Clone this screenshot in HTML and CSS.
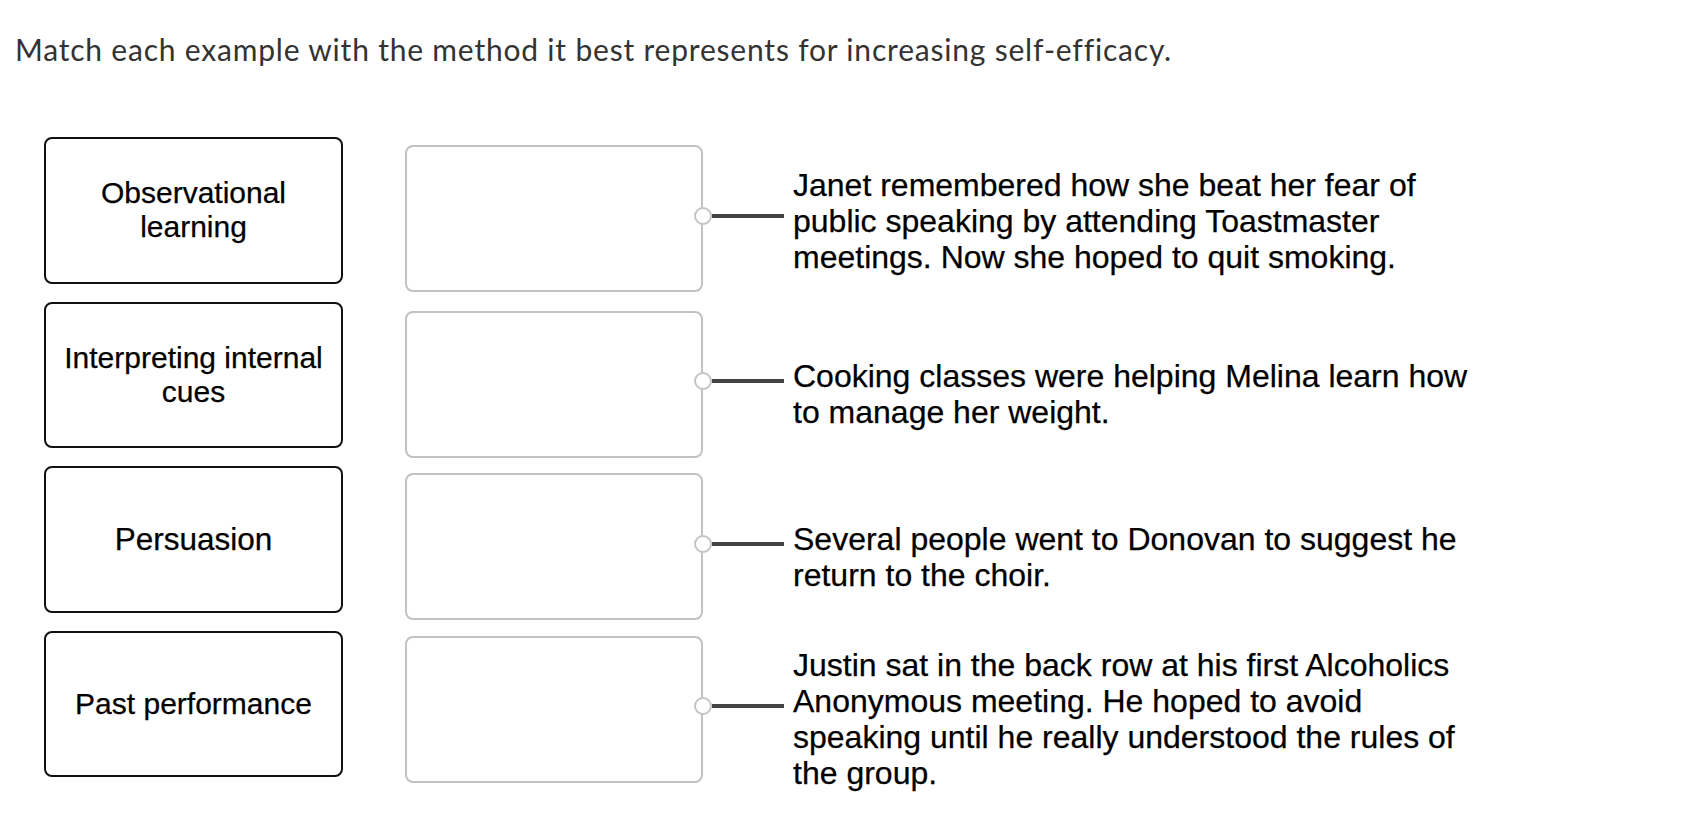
FILE: index.html
```html
<!DOCTYPE html>
<html lang="en">
<head>
<meta charset="utf-8">
<title>Matching: increasing self-efficacy</title>
<link rel="stylesheet" href="styles.css">
</head>
<body>
  <p class="prompt">Match each example with the method it best represents for increasing self-efficacy.</p>

  <div class="board">
    <div class="choices">
      <div class="card">Observational learning</div>
      <div class="card">Interpreting internal cues</div>
      <div class="card card-large">Persuasion</div>
      <div class="card">Past performance</div>
    </div>

    <div class="matches">
      <div class="row row-first">
        <div class="slot"></div>
        <div class="link"><span class="knob"></span><span class="wire"></span></div>
        <div class="label"><p class="example">Janet remembered how she beat her fear of public speaking by attending Toastmaster meetings. Now she hoped to quit smoking.</p></div>
      </div>
      <div class="row">
        <div class="slot"></div>
        <div class="link"><span class="knob"></span><span class="wire"></span></div>
        <div class="label"><p class="example">Cooking classes were helping Melina learn how to manage her weight.</p></div>
      </div>
      <div class="row">
        <div class="slot"></div>
        <div class="link"><span class="knob"></span><span class="wire"></span></div>
        <div class="label"><p class="example">Several people went to Donovan to suggest he return to the choir.</p></div>
      </div>
      <div class="row">
        <div class="slot"></div>
        <div class="link"><span class="knob"></span><span class="wire"></span></div>
        <div class="label"><p class="example">Justin sat in the back row at his first Alcoholics Anonymous meeting. He hoped to avoid speaking until he really understood the rules of the group.</p></div>
      </div>
    </div>
  </div>
</body>
</html>
```
FILE: styles.css
```css
html, body {
  margin: 0;
  padding: 0;
  background: #fff;
}

body {
  min-height: 830px;
  padding-bottom: 40px;
  box-sizing: border-box;
  font-family: "Liberation Sans", Arial, sans-serif;
  color: #000;
}

/* question prompt */
.prompt {
  margin: 0;
  padding: 31px 0 0 15px;
  font-family: Lato, "Open Sans", sans-serif;
  font-size: 30px;
  line-height: 36px;
  letter-spacing: 0.8px;
  color: #333;
}

/* two columns: answer cards and match rows */
.board {
  display: flex;
  align-items: flex-start;
  margin-top: 70px;
  padding-left: 44px;
}

.choices {
  display: flex;
  flex-direction: column;
  gap: 18px;
  width: 299px;
}

.card {
  box-sizing: border-box;
  height: 146.5px;
  padding: 0 18px;
  border: 2px solid #111;
  border-radius: 8px;
  display: flex;
  align-items: center;
  justify-content: center;
  text-align: center;
  font-size: 30px;
  line-height: 34px;
  color: #000;
  -webkit-text-stroke: 0.25px #000;
}

.card-large {
  font-size: 31.5px;
}

.matches {
  display: flex;
  flex-direction: column;
  gap: 15.5px;
  margin-top: 8px;
  margin-left: 62px;
}

.row {
  display: flex;
  align-items: center;
}

.row-first {
  margin-bottom: 3px;
}

.slot {
  box-sizing: border-box;
  flex: none;
  width: 298px;
  height: 147px;
  border: 2px solid #c2c2c2;
  border-radius: 8px;
  background: #fff;
}

/* connector: knob sits on the slot's right edge */
.link {
  flex: none;
  display: flex;
  align-items: center;
  margin-left: -9px;
  margin-bottom: 6px;
}

.knob {
  box-sizing: border-box;
  width: 18px;
  height: 18px;
  border: 2px solid #c4c4c4;
  border-radius: 50%;
  background: #fff;
}

.wire {
  width: 72px;
  height: 4px;
  background: #444;
}

/* example text box, same height as the slot; text sits a little low */
.label {
  height: 147px;
  margin-left: 9px;
  display: flex;
  align-items: center;
  padding-top: 20px;
  box-sizing: border-box;
}

.row-first .label {
  padding-top: 5px;
}

.example {
  width: 690px;
  margin: 0;
  font-size: 32px;
  line-height: 36px;
  color: #000;
  -webkit-text-stroke: 0.25px #000;
}
```
